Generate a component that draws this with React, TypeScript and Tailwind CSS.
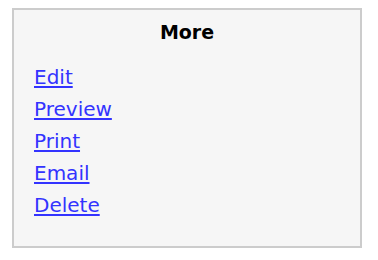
export default function App() {
  const links = ['Edit', 'Preview', 'Print', 'Email', 'Delete']

  return (
    <div className="pt-2 pl-3 bg-white min-h-[260px]" style={{ fontFamily: '"DejaVu Sans", Verdana, sans-serif' }}>
      <div className="w-[350px] h-[240px] border-2 border-[#cccccc] bg-[#f6f6f6] pt-[6px] px-[20px]">
        <h3 className="text-center font-bold text-[19px] leading-[32px] text-black">More</h3>
        <ul className="mt-[13px]">
          {links.map(link => (
            <li key={link} className="text-[20px] leading-[32px]">
              <a href="#" className="text-[#3333ff] underline decoration-2 underline-offset-2">
                {link}
              </a>
            </li>
          ))}
        </ul>
      </div>
    </div>
  )
}
